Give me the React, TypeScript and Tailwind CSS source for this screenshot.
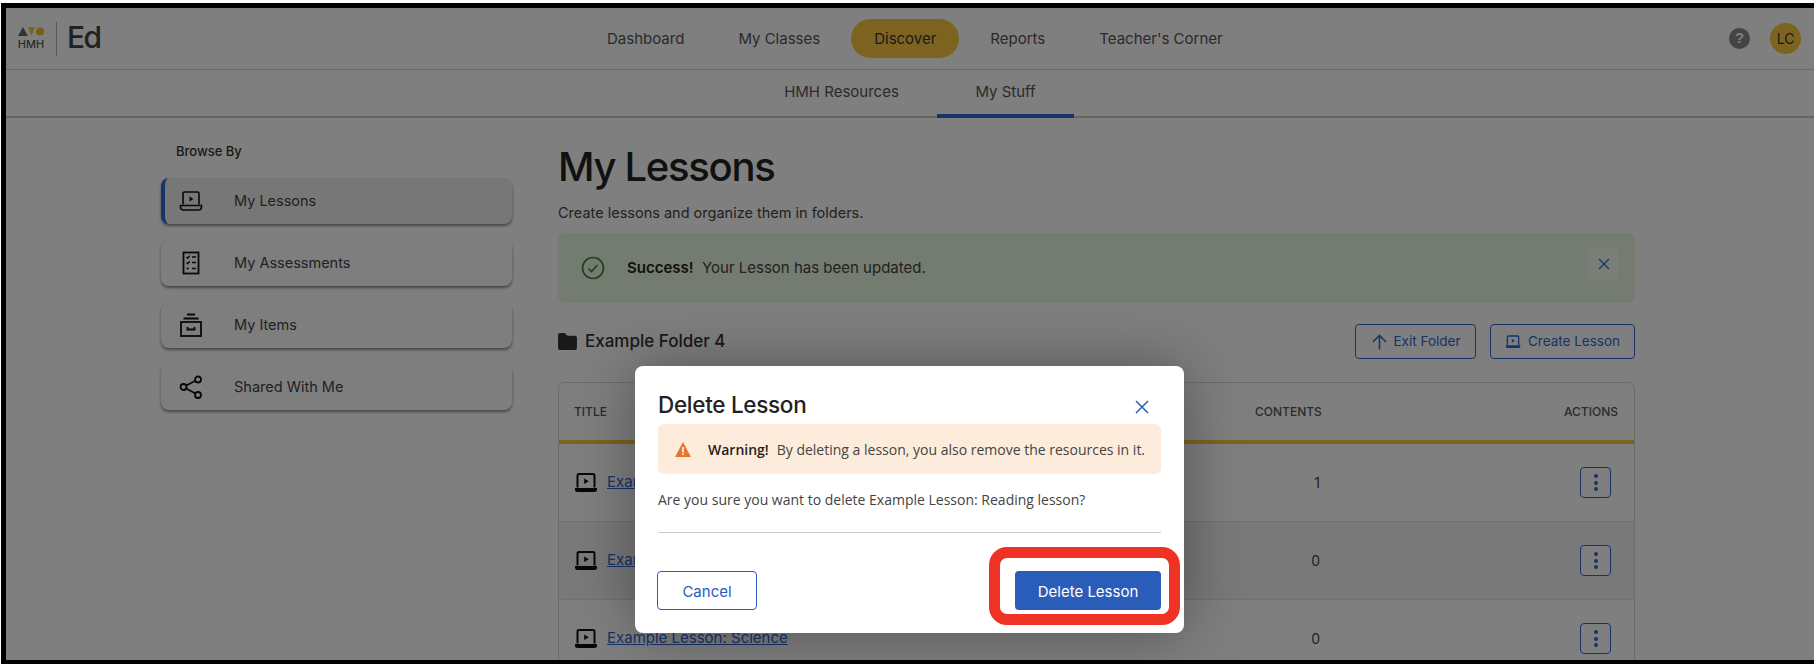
import React from "react";

const geo = "font-['Inter','Noto_Sans',sans-serif]";

function LaptopIcon({ className = "w-[24px] h-[24px]" }: { className?: string }) {
  return (
    <svg viewBox="0 0 24 24" className={className} fill="none">
      <path d="M3.500 16.500V4.500a1.500 1.500 0 0 1 1.500-1.500h14a1.500 1.500 0 0 1 1.500 1.500v12" stroke="currentColor" strokeWidth="2" />
      <path d="M1 17h22v1.500a2.500 2.500 0 0 1-2.500 2.500h-17A2.500 2.500 0 0 1 1 18.500z" fill="currentColor" />
      <path d="M10.200 7.500l4.600 2.800-4.600 2.800z" fill="currentColor" />
    </svg>
  );
}

function LaptopOutlineIcon() {
  return (
    <svg viewBox="0 0 24 24" className="w-[24px] h-[24px]" fill="none" stroke="currentColor" strokeWidth="1.600">
      <path d="M4 15.500V4.500A1.500 1.500 0 0 1 5.500 3h13A1.500 1.500 0 0 1 20 4.500v11" />
      <path d="M1.500 16.500h21v1.500a3 3 0 0 1-3 3h-15a3 3 0 0 1-3-3z" />
      <path d="M10.500 7.500l4 2.500-4 2.500z" fill="currentColor" stroke="none" />
    </svg>
  );
}

function AssessIcon() {
  return (
    <svg viewBox="0 0 24 24" className="w-[24px] h-[24px]" fill="none" stroke="currentColor" strokeWidth="1.800">
      <rect x="4.500" y="1.500" width="15" height="21" />
      <path d="M7.500 6l1.200 1.300L10.800 4.800M7.500 11.500l1.200 1.300 2.100-2.500" strokeWidth="1.400" />
      <path d="M13 6h4M13 11.500h4M13 17.500h4M7.500 17.500h2.500" strokeWidth="1.400" />
    </svg>
  );
}

function ItemsIcon() {
  return (
    <svg viewBox="0 0 24 24" className="w-[24px] h-[24px]" fill="none" stroke="currentColor" strokeWidth="1.800">
      <path d="M8 1.500h8M4.500 5.500h15" />
      <rect x="2" y="9" width="20" height="14" />
      <path d="M8.500 14v2.500h7V14" />
    </svg>
  );
}

function ShareIcon() {
  return (
    <svg viewBox="0 0 24 24" className="w-[24px] h-[24px]" fill="none" stroke="currentColor" strokeWidth="1.800">
      <circle cx="19" cy="4.500" r="3" />
      <circle cx="4.500" cy="12" r="3" />
      <circle cx="19" cy="20" r="3" />
      <path d="M7.200 10.500l9.200-4.800M7.200 13.500l9.200 5" />
    </svg>
  );
}

function Kebab() {
  return (
    <button className="w-[31px] h-[31px] rounded-[4px] border border-[#2f66d0] bg-white flex flex-col items-center justify-center gap-[2.500px]">
      <span className="w-[4px] h-[4px] rounded-full bg-[#2f66d0]" />
      <span className="w-[4px] h-[4px] rounded-full bg-[#2f66d0]" />
      <span className="w-[4px] h-[4px] rounded-full bg-[#2f66d0]" />
    </button>
  );
}

const navItems = ["Dashboard", "My Classes", "Discover", "Reports", "Teacher's Corner"];

function Header() {
  return (
    <header className="h-[62px] shrink-0 border-b border-[#d0d0d0] flex items-center pl-[10px] pr-[13px]">
      <div className="flex items-center w-[120px] shrink-0">
        <div className="flex flex-col items-center w-[30px]">
          <svg viewBox="0 0 30 10" className="w-[29px] h-[9px]">
            <path d="M0 10L5.500 0 11 10z" fill="#666" />
            <path d="M11 0h8l-4 10z" fill="#f8c53a" />
            <circle cx="24.500" cy="5" r="4.500" fill="#f5b82e" />
          </svg>
          <span className={`${geo} text-[11px] leading-[13px] text-[#555] font-medium mt-[2px]`}>HMH</span>
        </div>
        <div className="w-px h-[34px] bg-[#aaa] ml-[10px] mr-[10px]" />
        <span className={`${geo} text-[30px] leading-none text-[#444] font-medium tracking-[-1.500px] -mt-[4px]`}>Ed</span>
      </div>
      <nav className="flex items-center ml-[444px]">
        {navItems.map((n) => (
          <a
            key={n}
            className={`${geo} text-[15px] h-[39px] pt-[2px] flex items-center rounded-[20px] ${n === "Discover" ? "bg-[#f9c841] text-[#333] px-[23px] mx-[4px]" : "text-[#555] px-[27px]"}`}
          >
            {n}
          </a>
        ))}
      </nav>
      <div className="flex items-center gap-[20px] ml-auto">
        <span className="w-[21px] h-[21px] rounded-full bg-[#888] text-white font-['Liberation_Sans',sans-serif] font-bold text-[15px] flex items-center justify-center">?</span>
        <span className={`${geo} w-[31px] h-[31px] rounded-full bg-[#f9c841] text-[#333] text-[14px] flex items-center justify-center`}>LC</span>
      </div>
    </header>
  );
}

function SubNav() {
  return (
    <div className="h-[48px] shrink-0 border-b-2 border-[#c8c8c8] flex items-stretch gap-[27px] pl-[767px]">
      <a className={`${geo} w-[137px] text-center text-[15px] leading-[44px] text-[#555]`}>HMH Resources</a>
      <a className={`${geo} w-[137px] text-center text-[15px] leading-[44px] text-[#555] border-b-4 border-[#2f66d0] -mb-[2px]`}>My Stuff</a>
    </div>
  );
}

function SideItem({ icon, label, active }: { icon: React.ReactNode; label: string; active?: boolean }) {
  return (
    <div
      className={`h-[46px] rounded-[8px] flex items-center shadow-[0_2px_3px_rgba(0,0,0,0.45)] ${active ? "bg-[#eeeeee] border-l-[4px] border-[#2f66d0] pl-[14px]" : "bg-[#fdfdfd] pl-[18px]"}`}
    >
      <span className="w-[24px] h-[24px] text-[#111] shrink-0">{icon}</span>
      <span className={`${geo} text-[14.500px] ml-[31px] text-[#444]`}>{label}</span>
    </div>
  );
}

function Row({ name, count, shaded }: { name: string; count: string; shaded?: boolean }) {
  return (
    <div className={`h-[78px] shrink-0 flex items-center pl-[15px] pr-[23px] border-b border-[#e5e5e5] ${shaded ? "bg-[#f2f2f2]" : ""}`}>
      <span className="w-[24px] h-[24px] text-[#111] shrink-0"><LaptopIcon /></span>
      <a className={`${geo} text-[15px] text-[#2f66d0] underline ml-[9px] w-[630px]`}>{name}</a>
      <span className={`${geo} text-[14px] text-[#444] w-[83px] text-right`}>{count}</span>
      <span className="ml-auto"><Kebab /></span>
    </div>
  );
}

export default function App() {
  return (
    <div className="relative w-[1814px] h-[664px] overflow-hidden bg-white pt-[3px] pl-[1px]">
      <div className="h-[661px] border-l-[5px] border-t-[5px] border-b-[4px] border-black">
        <div className="relative h-[652px] overflow-hidden bg-white flex flex-col">
          <Header />
          <SubNav />
          <div className="flex pl-[155px] pt-[22px] min-h-0 flex-1">
            <aside className="w-[351px] shrink-0">
              <div className={`${geo} text-[13px] font-medium text-[#333] pl-[15px] leading-[18px] mt-[2px] mb-[18px]`}>Browse By</div>
              <div className="flex flex-col gap-[16px]">
                <SideItem active icon={<LaptopOutlineIcon />} label="My Lessons" />
                <SideItem icon={<AssessIcon />} label="My Assessments" />
                <SideItem icon={<ItemsIcon />} label="My Items" />
                <SideItem icon={<ShareIcon />} label="Shared With Me" />
              </div>
            </aside>
            <main className="ml-[46px] w-[1077px] shrink-0">
              <h1 className={`${geo} text-[40px] leading-[50px] font-medium tracking-[-1.300px] text-[#222] mt-[1.500px]`}>My Lessons</h1>
              <p className={`${geo} text-[14.500px] leading-[20px] text-[#444] mt-[11.500px]`}>Create lessons and organize them in folders.</p>
              <div className="h-[70px] mt-[10px] rounded-[8px] bg-[#e9f7e1] flex items-start pl-[23px] pr-[16px]">
                <svg viewBox="0 0 24 24" className="w-[24px] h-[24px] mt-[23px] text-[#3a8a2f]" fill="none" stroke="currentColor" strokeWidth="1.700">
                  <circle cx="12" cy="12" r="10.500" />
                  <path d="M7.500 12.500l3 3 6-6.500" />
                </svg>
                <div className={`${geo} text-[15px] leading-[24px] mt-[23px] ml-[22px] text-[#444]`}>
                  <b className="font-semibold text-[#222]">Success!</b>&nbsp; Your Lesson has been updated.
                </div>
                <button className="ml-auto mt-[15px] w-[31px] h-[32px] rounded-[4px] bg-[#ffffff80] flex items-center justify-center text-[#2f66d0]">
                  <svg viewBox="0 0 12 12" className="w-[12px] h-[12px]" fill="none" stroke="currentColor" strokeWidth="1.300"><path d="M1 1l10 10M11 1L1 11" /></svg>
                </button>
              </div>
              <div className="flex items-center justify-between mt-[21px] h-[35px]">
                <div className="flex items-center">
                  <svg viewBox="0 0 20 18" className="w-[19px] h-[17px] text-[#333]"><path d="M0 2a2 2 0 0 1 2-2h5l3 3h8a2 2 0 0 1 2 2v11a2 2 0 0 1-2 2H2a2 2 0 0 1-2-2z" fill="currentColor" /></svg>
                  <span className={`${geo} text-[17px] font-medium text-[#333] ml-[8px]`}>Example Folder 4</span>
                </div>
                <div className="flex gap-[14px]">
                  <button className={`${geo} h-[35px] w-[121px] rounded-[4px] border border-[#2f66d0] text-[#2f66d0] text-[13.500px] flex items-center justify-center gap-[6px]`}>
                    <svg viewBox="0 0 18 18" className="w-[17px] h-[18px]" fill="none" stroke="currentColor" strokeWidth="1.600"><path d="M9 17V2M2 9l7-7 7 7" /></svg>
                    Exit Folder
                  </button>
                  <button className={`${geo} h-[35px] w-[145px] rounded-[4px] border border-[#2f66d0] text-[#2f66d0] text-[13.500px] flex items-center justify-center gap-[7px]`}>
                    <span className="w-[16px] h-[16px]"><LaptopIcon className="w-[16px] h-[16px]" /></span>
                    Create Lesson
                  </button>
                </div>
              </div>
              <div className="mt-[23px] rounded-t-[6px] border border-b-0 border-[#d8d8d8]">
                <div className="h-[57px] flex items-center pl-[15px] pr-[16px] border-b-4 border-[#f9c841] box-content">
                  <span className={`${geo} text-[12px] font-medium text-[#555] w-[681px]`}>TITLE</span>
                  <span className={`${geo} text-[12px] font-medium text-[#555]`}>CONTENTS</span>
                  <span className={`${geo} text-[12px] font-medium text-[#555] ml-auto`}>ACTIONS</span>
                </div>
                <Row name="Example Lesson: Reading lesson" count="1" />
                <Row name="Example Lesson: Math" count="0" shaded />
                <Row name="Example Lesson: Science" count="0" />
              </div>
            </main>
          </div>
          <div className="absolute inset-0 bg-black/50" />
        </div>
      </div>

      <div className="absolute left-[635px] top-[366px] w-[549px] h-[267px] bg-white rounded-[8px] shadow-[0_0_60px_rgba(0,0,0,0.35)] pt-[23px] px-[23px] flex flex-col">
        <div className="flex items-center justify-between h-[32px]">
          <h2 className={`${geo} text-[22.500px] font-medium tracking-[-0.300px] text-[#222] leading-[32px]`}>Delete Lesson</h2>
          <svg viewBox="0 0 14 14" className="w-[14px] h-[14px] mr-[12px] mt-[4px] text-[#2a5cba]" fill="none" stroke="currentColor" strokeWidth="1.500"><path d="M1 1l12 12M13 1L1 13" /></svg>
        </div>
        <div className="mt-[3px] h-[50px] rounded-[6px] bg-[#fdecdb] flex items-center pl-[17px] font-['Open_Sans',sans-serif] text-[14px] text-[#444]">
          <svg viewBox="0 0 16 15" className="w-[16px] h-[15px] shrink-0"><path d="M8 0l8 15H0z" fill="#e8762f" /><path d="M7.200 5h1.600v5.500H7.200zM7.200 11.500h1.600v1.600H7.200z" fill="#fff" /></svg>
          <b className="ml-[17px] font-semibold text-[#222]">Warning!</b>
          <span className="ml-[8px]">By deleting a lesson, you also remove the resources in it.</span>
        </div>
        <p className="font-['Open_Sans',sans-serif] text-[14px] text-[#444] mt-[17px] leading-[18px]">Are you sure you want to delete Example Lesson: Reading lesson?</p>
        <div className="h-px bg-[#ccc] mt-[23px]" />
        <div className="flex justify-between mt-[38px]">
          <button className={`${geo} w-[100px] h-[39px] pt-[3px] -ml-px rounded-[4px] border border-[#2a5cba] text-[#2a5cba] text-[15px]`}>Cancel</button>
          <button className={`${geo} w-[146px] h-[39px] pt-[3px] rounded-[4px] bg-[#2a5cba] text-white text-[15px]`}>Delete Lesson</button>
        </div>
      </div>
      <div className="absolute left-[989px] top-[547px] w-[191px] h-[78px] rounded-[18px] border-[11px] border-[#ee3324]" />
    </div>
  );
}
